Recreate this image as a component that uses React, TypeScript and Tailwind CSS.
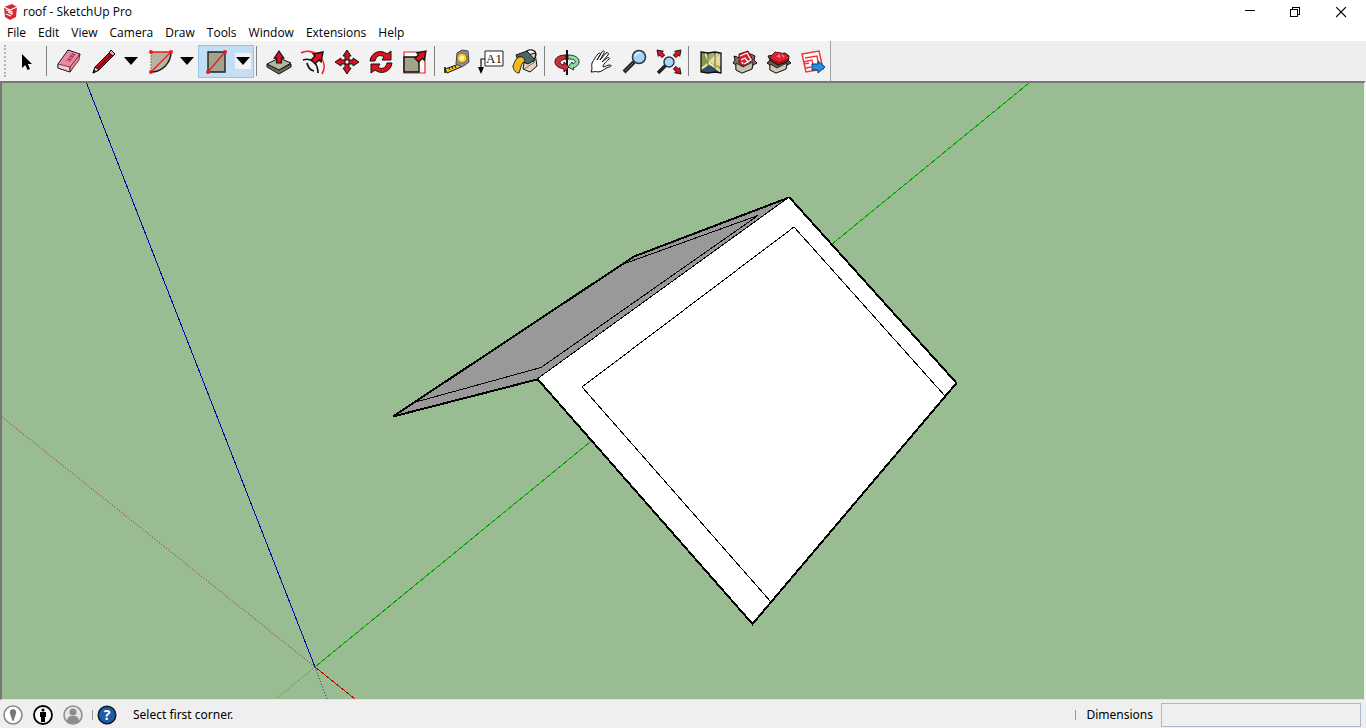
import type { ReactNode } from 'react';
import clsx from 'clsx';

const menus = ['File', 'Edit', 'View', 'Camera', 'Draw', 'Tools', 'Window', 'Extensions', 'Help'];

const RED = '#e01020';
const INK = '#111111';
const CLAY = '#a3a38c';

function Icon({ children }: { children: ReactNode }) {
  return (
    <svg viewBox="0 0 28 28" className="h-7 w-7 shrink-0" fill="none" aria-hidden="true">
      {children}
    </svg>
  );
}

// Arrow pointing up with its tip at the origin
function Arrow({ x, y, turn = 0, size = 1 }: { x: number; y: number; turn?: number; size?: number }) {
  return (
    <path
      transform={`translate(${x} ${y}) rotate(${turn}) scale(${size})`}
      d="M0 0 4 6H2v4h-4V6h-2Z"
      fill={RED}
      stroke={INK}
      strokeWidth="1"
    />
  );
}

const icons = {
  select: <path d="M9 7v14l3.3-3 2.2 5 2.5-1.1-2.2-4.8H19Z" fill="#000" />,
  eraser: (
    <>
      <path d="M13 3 25 7 15 25 3 21V17Z" fill="#f9a3b8" stroke={INK} />
      <path d="m5 17 10 2 9-12-11-3Z" fill="#ee87a2" />
      <path d="m3 17 12 3v5L3 21Z" fill="#ffc3cf" stroke={INK} strokeWidth=".7" />
      <path d="m15 20 10-13-1 6-9 12Z" fill="#f57f9b" stroke={INK} strokeWidth=".7" />
      <path d="m12 14 6-8m-4 9 6-8m-7 5 3 1m-1-4 3 1m-1-3 3 1" stroke="#7c3448" strokeWidth=".9" />
    </>
  ),
  pencil: (
    <>
      <path d="m3 26 2-6L21 4l4 3L9 23Z" fill="#c90d18" stroke={INK} />
      <path d="m3 26 2-6 4 3Z" fill="#ecd59e" stroke={INK} />
      <path d="m3 26 1-3 2 1Z" fill="#000" />
      <path d="m8 21 13-13" stroke="#7e0710" strokeWidth="1.5" />
      <path d="m19 6 4 3 2-2-4-4Z" fill="#f2a0a6" stroke={INK} />
    </>
  ),
  arc: (
    <>
      <path d="M5 5h20A20 20 0 0 1 5 25Z" fill="#b5b59f" />
      <path d="M25 5A20 20 0 0 1 5 25" stroke={INK} strokeWidth="1.4" />
      <path d="M5 25V5" stroke="#777" strokeDasharray="2 1" />
      <path d="M5 5h20L5 25" stroke="#f01820" strokeWidth="1.3" />
      <circle cx="5" cy="5" r="2" fill="#f01820" />
      <circle cx="25" cy="5" r="2" fill="#f01820" />
      <circle cx="5" cy="25" r="2" fill="#f01820" />
    </>
  ),
  rect: (
    <>
      <path d="M6 5h17v20H6Z" fill={CLAY} stroke="#222" strokeWidth="1.4" />
      <path d="M6 25 23 5" stroke="#f01820" strokeWidth="1.3" />
      <circle cx="6" cy="25" r="2" fill="#f01820" />
      <circle cx="23" cy="5" r="2" fill="#f01820" />
    </>
  ),
  push: (
    <>
      <path d="m2 17 12 6 12-6v3l-12 7-12-7Z" fill="#6f705c" stroke={INK} />
      <path d="m2 17 12-6 12 5-12 7Z" fill="#b6b69f" stroke={INK} />
      <Arrow x={14} y={4} size={1.2} />
    </>
  ),
  offset: (
    <>
      <path d="M2 6c5-3 12-2 17 2 6 5 8 12 4 19" stroke="#ee2430" strokeWidth="1.6" />
      <path d="M4 13c9-3 15 4 15 13" stroke={INK} strokeWidth="1.7" />
      <path d="M8 16c1 5 3 7 7 8" stroke={INK} strokeWidth="1.7" />
      <Arrow x={24} y={5} turn={45} size={1.4} />
    </>
  ),
  move: (
    <>
      <Arrow x={14} y={3} />
      <Arrow x={26} y={15} turn={90} />
      <Arrow x={14} y={27} turn={180} />
      <Arrow x={2} y={15} turn={270} />
    </>
  ),
  rotate: (
    <>
      <path d="M3 14C4 5 14 2 20 7l4-3v9h-9l2-3c-4-3-8-1-9 4Z" fill={RED} stroke={INK} />
      <path d="M25 16c-1 9-11 12-17 7l-4 3v-9h9l-2 3c4 3 8 1 9-4Z" fill={RED} stroke={INK} />
    </>
  ),
  scale: (
    <>
      <path d="M3 5h21v21H3Z" fill="#fff" stroke="#ee1c25" strokeWidth="1.2" />
      <path d="M3 10h15v15H3Z" fill={CLAY} stroke={INK} strokeWidth="1.4" />
      <Arrow x={25} y={4} turn={45} size={1.3} />
    </>
  ),
  tape: (
    <>
      <path d="m2 22 14-5 2 3-14 6Z" fill="#f4c920" stroke={INK} />
      <path d="m6 21 1 2m2-3 1 2m2-3 1 2" stroke={INK} />
      <path d="M2 20v6" stroke={INK} strokeWidth="1.6" />
      <path d="m14 6 5-3 6 1 1 11-7 5-6-3Z" fill="#8d9098" stroke="#444" />
      <circle cx="19" cy="11" r="5" fill="#f5cb22" stroke="#70551a" strokeWidth=".8" />
      <circle cx="19" cy="11" r="2.5" fill="#fff3bd" />
    </>
  ),
  text: (
    <>
      <path d="M8 4h18v15H8Z" fill="#fff" stroke="#222" />
      <path d="M8 12H4v9" stroke={INK} strokeWidth="1.2" />
      <path d="M1 20h6l-3 7Z" fill="#000" />
      <text x="17" y="16" textAnchor="middle" fontFamily="Liberation Serif, serif" fontSize="13" fill="#111">
        A1
      </text>
    </>
  ),
  paint: (
    <>
      <path d="m14 9 10-3 2 13-7 6-7-3Z" fill="#e2d6bb" stroke={INK} />
      <path d="M14 6c3-5 11-4 11 2l-3 7" stroke={INK} strokeWidth="1.2" />
      <path d="m5 8 11-4 8 9-7 4-10-4Z" fill="#4d656c" stroke={INK} />
      <path d="M8 10c3-1 6 1 6 4-4 2-4 7-6 12-4 0-6-4-6-7 2-5 3-8 6-9Z" fill="#f2b91d" stroke={INK} strokeWidth=".9" />
      <path d="m13 22 11-7" stroke="#77715f" />
    </>
  ),
  orbit: (
    <>
      <path d="M14 3v25" stroke={INK} strokeWidth="2" />
      <path
        d="M15 8c6 0 11 2 11 7 0 3-3 5-6 6l1 2-6-3 4-5 1 2c4-2 3-5-5-5Z"
        fill="#8ddba6"
        stroke="#173d26"
      />
      <path
        d="M13 8C7 8 2 10 2 15c0 4 4 6 9 7v3l5-5-5-5v3c-6-1-5-5 2-6Z"
        fill="#c9303c"
        stroke="#3e090d"
      />
      <path d="M14 3v12" stroke={INK} strokeWidth="2" />
    </>
  ),
  pan: (
    <path
      d="M4 25c2-3 0-6 1-9 2-3 3-6 6-9 2-2 3 0 2 1l-3 5 5-8c1-2 3-1 2 1l-4 7 6-7c2-1 3 0 2 2l-6 7 5-4c2-1 3 0 2 1-3 3-6 5-6 8 2 0 4-2 7-2 2 0 1 2-1 2-4 1-7 5-11 5-2-1-4 0-7 0Z"
      fill="#fff"
      stroke={INK}
      strokeLinejoin="round"
    />
  ),
  zoom: (
    <>
      <path d="m13 15-10 10" stroke="#222" strokeWidth="4" />
      <path d="m12 16-8 8" stroke="#777" strokeWidth="1" />
      <circle cx="18" cy="10" r="6.5" fill="#a9d3f0" stroke="#26364f" strokeWidth="1.5" />
      <path d="M14 9c1-3 4-4 6-3" stroke="#e5f5ff" strokeWidth="1.5" />
    </>
  ),
  extents: (
    <>
      <path d="m11 18-8 8" stroke="#222" strokeWidth="3.5" />
      <Arrow x={2} y={3} turn={-45} size={0.9} />
      <Arrow x={26} y={3} turn={45} size={0.9} />
      <Arrow x={26} y={27} turn={135} size={0.9} />
      <circle cx="14" cy="15" r="5" fill="#a9d9f0" stroke="#26364f" strokeWidth="1.4" />
    </>
  ),
  map: (
    <>
      <path d="m4 5 7 1 7-1 6 1v20l-6-1-7 1-7-1Z" fill="#7f9b4e" />
      <path d="m11 6 7-1v20l-7 1Z" fill="#a9b25f" />
      <path d="m12 15 12-9v14Z" fill="#e8d7a3" />
      <path d="m4 23 9-5 11 5v3l-6-1-7 1-7-1Z" fill="#31506b" />
      <path d="m4 22 8-6 12 9M12 16 8 5m4 11 9-10" stroke="#f2ecc4" strokeWidth="1.6" />
      <path d="m13 14 10 9" stroke="#f0d246" strokeWidth="1.4" />
      <path d="M11 6v20m7-21v20" stroke="#3b4630" strokeWidth=".8" />
      <path d="m4 5 7 1 7-1 6 1v20l-6-1-7 1-7-1Z" stroke={INK} strokeWidth="1.3" />
    </>
  ),
  warehouse: (
    <>
      <path d="m3 9 6 2 11-4 4 2-1 4 3 3-4 2-1 4-10 4-6-3v-5l-3-2 2-3Z" fill="#77756a" stroke={INK} />
      <path d="m5 16 7 4 10-5-1 7-10 4-6-3Z" fill="#c5c1aa" stroke={INK} strokeWidth=".8" />
      <path d="m8 7 9-3 5 9-10 6-4-3Z" fill="#d9202c" stroke="#67131a" />
      <path d="m9 9 7-3 4 7-4 2m-6-2 4-2 3 4-4 2m-2-2 1 2" stroke="#fff" strokeWidth="1.3" />
    </>
  ),
  extension: (
    <>
      <path d="m3 9 6-1 11-2 4 3-1 4 3 3-4 2-1 4-10 4-6-3v-5l-3-2 3-3Z" fill="#5f5d55" stroke={INK} />
      <path d="m5 17 7 4 10-5-1 6-10 4-6-3Z" fill="#d0ccb6" stroke={INK} strokeWidth=".8" />
      <path d="m5 11 5-6 11 2 3 4-2 4-9 3-7-4Z" fill="#a50d1a" stroke={INK} />
      <path d="m5 11 5-6 11 2 3 4-10 4Z" fill="#e0242f" />
      <path d="m12 10 2-2 1 3m2-3 2 2" stroke="#ff8b91" strokeWidth="1.2" />
    </>
  ),
  layout: (
    <>
      <path d="m3 7 17-3 4 18-17 3Z" fill="#fff" stroke="#f0343c" strokeWidth="1.5" />
      <path d="m6 11 12-2 2 11M4 15l9-2 2 11M10 16l-5 1m2 4 5-1" stroke="#f0343c" strokeWidth="1.4" />
      <path d="M13 17h6v-3l7 6-7 6v-3h-6Z" fill="#1b91e8" stroke="#123b65" />
    </>
  ),
};

type IconName = keyof typeof icons;

const groups: { label: string; icon: IconName }[][] = [
  [
    { label: 'Push/Pull', icon: 'push' },
    { label: 'Offset', icon: 'offset' },
    { label: 'Move', icon: 'move' },
    { label: 'Rotate', icon: 'rotate' },
    { label: 'Scale', icon: 'scale' },
  ],
  [
    { label: 'Tape Measure', icon: 'tape' },
    { label: 'Text', icon: 'text' },
    { label: 'Paint Bucket', icon: 'paint' },
  ],
  [
    { label: 'Orbit', icon: 'orbit' },
    { label: 'Pan', icon: 'pan' },
    { label: 'Zoom', icon: 'zoom' },
    { label: 'Zoom Extents', icon: 'extents' },
  ],
  [
    { label: 'Add Location', icon: 'map' },
    { label: '3D Warehouse', icon: 'warehouse' },
    { label: 'Extension Warehouse', icon: 'extension' },
    { label: 'Send to LayOut', icon: 'layout' },
  ],
];

function Tool({ label, icon }: { label: string; icon: IconName }) {
  return (
    <button type="button" aria-label={label} className="flex h-8 w-[34px] shrink-0 items-center justify-center">
      <Icon>{icons[icon]}</Icon>
    </button>
  );
}

function SplitTool({ label, icon, active = false }: { label: string; icon: IconName; active?: boolean }) {
  return (
    <div
      className={clsx(
        'flex h-[33px] w-14 shrink-0 items-center border',
        active ? 'border-[#90c4ec] bg-[#c4dff5]' : 'border-transparent',
      )}
    >
      <button type="button" aria-label={label} className="flex h-full w-[34px] items-center justify-center">
        <Icon>{icons[icon]}</Icon>
      </button>
      <button
        type="button"
        aria-label={`${label} options`}
        className={clsx('ml-0.5 flex h-4 w-4 items-center justify-center', active && 'bg-[#f2f2f2]')}
      >
        <svg viewBox="0 0 14 8" className="h-2 w-3.5" aria-hidden="true">
          <path d="M0 0h14L7 8Z" fill="#000" />
        </svg>
      </button>
    </div>
  );
}

function Divider() {
  return (
    <div className="w-2 shrink-0 pl-0.5">
      <div className="h-[30px] w-px bg-[#808080]" />
    </div>
  );
}

function TitleBar() {
  return (
    <header className="flex h-6 items-center bg-white pl-[3px]">
      <svg viewBox="0 0 16 16" className="h-4 w-4" aria-hidden="true">
        <path d="m1 3 8-3 5 3-1 10-6 3-5-3Z" fill="#df2430" />
        <path d="m1 3 6 3 7-3M3 6l6 2v2L5 8m-2 2 5 2" fill="none" stroke="#fff" strokeWidth="1.2" />
      </svg>
      <h1 className="ml-1 flex-1 text-xs">roof - SketchUp Pro</h1>
      <button type="button" aria-label="Minimize" className="flex h-5 w-11 items-center justify-center">
        <svg viewBox="0 0 10 10" className="h-2.5 w-2.5" shapeRendering="crispEdges">
          <path d="M0 3h10v1H0Z" fill="#000" />
        </svg>
      </button>
      <button type="button" aria-label="Restore" className="flex h-5 w-[46px] items-center justify-center">
        <svg viewBox="0 0 11 11" className="h-[11px] w-[11px]" fill="none" stroke="#000" shapeRendering="crispEdges">
          <path d="M.5 2.5h7v7h-7ZM2.5 2V.5h7v7H8" />
        </svg>
      </button>
      <button type="button" aria-label="Close" className="mr-[2px] flex h-5 w-[46px] items-center justify-center">
        <svg viewBox="0 0 11 11" className="h-[11px] w-[11px]" fill="none" stroke="#000" strokeWidth="1.1">
          <path d="m0 0 10 10M10 0 0 10" />
        </svg>
      </button>
    </header>
  );
}

function Toolbar() {
  return (
    <div className="flex h-10 bg-[#eeeeee]">
      <div role="toolbar" aria-label="Getting started" className="flex h-full items-center border-r border-[#a0a0a0] bg-[#f2f2f2]">
        <div className="w-2.5 shrink-0 pl-1">
          <div className="h-8 border-l-2 border-dotted border-[#b4b4b4]" />
        </div>
        <Tool label="Select" icon="select" />
        <Divider />
        <Tool label="Eraser" icon="eraser" />
        <SplitTool label="Line" icon="pencil" />
        <SplitTool label="Arc" icon="arc" />
        <SplitTool label="Rectangle" icon="rect" active />
        {groups.map((group) => (
          <div key={group[0].label} className="flex items-center">
            <Divider />
            {group.map((tool) => (
              <Tool key={tool.label} {...tool} />
            ))}
          </div>
        ))}
      </div>
    </div>
  );
}

function Viewport() {
  return (
    <main className="relative min-h-80 flex-1 border-x-2 border-b border-t-2 border-b-[#e4e4e4] border-l-[#777777] border-r-[#f4f4f4] border-t-[#767676] bg-[#9abc92]">
      <svg
        viewBox="2 83 1362 616"
        preserveAspectRatio="xMidYMid slice"
        className="absolute inset-0 h-full w-full"
        fill="none"
        shapeRendering="crispEdges"
        role="img"
        aria-label="Gable roof model"
      >
        {/* axes: solid on the positive side, dotted on the negative */}
        <path d="M86.5 83 315 667" stroke="#0000a8" />
        <path d="M315 667 1029 83" stroke="#00a800" />
        <path d="m315 667 40 32" stroke="#c80000" />
        <g strokeDasharray="1 2" shapeRendering="auto">
          <path d="M2 417 315 667" stroke="#8c2020" />
          <path d="m315 667-39 32" stroke="#109010" />
          <path d="m315 667 12 32" stroke="#2020a0" />
        </g>

        <path d="M393 417 634 257 789 198 537 379Z" fill="#999999" />
        <path d="m414 402.500 127-35 217-152-136 49M537 379l252-182" stroke="#000" />
        <path d="M537 379.500 393 416.500 634 256.500l155-59" stroke="#000" strokeWidth="2" />

        <path d="m789.500 197.500 167 185.500-204 241-215-245Z" fill="#fff" />
        <path d="m771 602-189-215 212-160 151 169M537 379l252-182" stroke="#000" />
        <path d="m789.500 197.500 167 185.500-204 241-215-245" stroke="#000" strokeWidth="2" />
      </svg>
    </main>
  );
}

function StatusBar() {
  return (
    <footer className="flex h-7 items-center bg-[#efefef] pl-[3px] pt-px font-['Noto_Sans',sans-serif] text-xs">
      <div className="flex items-center gap-2.5">
        <button type="button" aria-label="Geo-location">
          <svg viewBox="0 0 20 20" className="h-5 w-5">
            <circle cx="10" cy="10" r="9" fill="#fff" stroke="#8a8a8a" strokeWidth="1.6" />
            <path d="M10 4a3.3 3.3 0 0 1 3 4.5L10.5 16h-1L7 8.5A3.3 3.3 0 0 1 10 4Z" fill="#777" />
          </svg>
        </button>
        <button type="button" aria-label="Credits">
          <svg viewBox="0 0 20 20" className="h-5 w-5">
            <circle cx="10" cy="10" r="9" fill="#fff" stroke="#000" strokeWidth="1.8" />
            <circle cx="10" cy="5" r="1.6" fill="#000" />
            <path d="M7 7h6v5h-1v5H8v-5H7Z" fill="#000" />
          </svg>
        </button>
        <button type="button" aria-label="Sign in">
          <svg viewBox="0 0 20 20" className="h-5 w-5">
            <circle cx="10" cy="10" r="9" fill="#e6e6e6" stroke="#8f8f8f" strokeWidth="1.6" />
            <circle cx="10" cy="7" r="3.5" fill="#8c8c8c" />
            <path d="M4 16c0-3 2-5 4-5h4c2 0 4 2 4 5-3 3-9 3-12 0Z" fill="#8c8c8c" />
          </svg>
        </button>
      </div>
      <div className="ml-[9px] h-2.5 w-px bg-[#999999]" />
      <button type="button" aria-label="Help" className="ml-1">
        <svg viewBox="0 0 20 20" className="h-5 w-5">
          <circle cx="10" cy="10" r="8.8" fill="#1d5da8" stroke="#101820" strokeWidth="1.5" />
          <text x="10" y="15" textAnchor="middle" fontFamily="Open Sans, sans-serif" fontSize="14" fontWeight="700" fill="#fff">
            ?
          </text>
        </svg>
      </button>
      <p className="ml-4 flex-1">Select first corner.</p>
      <div className="mr-2.5 h-2.5 w-px bg-[#999999]" />
      <label htmlFor="dimensions">Dimensions</label>
      <input
        id="dimensions"
        type="text"
        className="ml-2 mr-[5px] h-6 w-[200px] border border-[#a9b8cc] bg-[#efefef] px-1 outline-none"
      />
    </footer>
  );
}

export default function App() {
  return (
    <div className="flex min-h-screen flex-col bg-white font-['Open_Sans','Noto_Sans',sans-serif] text-black">
      <TitleBar />
      <nav aria-label="Main menu" className="flex h-[17px] items-center bg-white pl-px text-xs">
        {menus.map((menu) => (
          <button key={menu} type="button" className="px-1.5 leading-4">
            {menu}
          </button>
        ))}
      </nav>
      <Toolbar />
      <Viewport />
      <StatusBar />
    </div>
  );
}
